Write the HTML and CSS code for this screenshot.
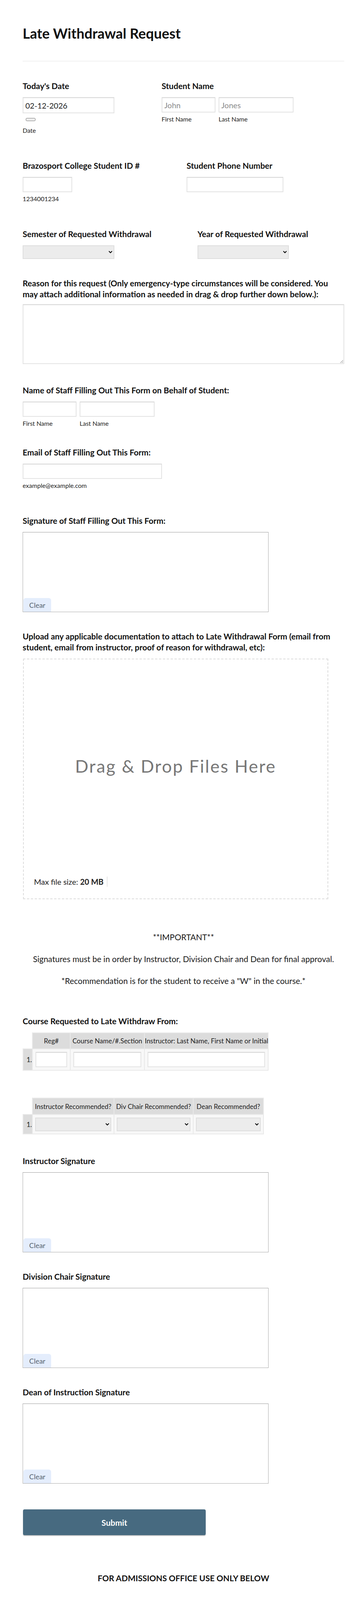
FILE: index.html
```html
<!DOCTYPE html>
<html lang="en">
<head>
  <meta charset="UTF-8">
  <title>Late Withdrawal Request</title>
  <link rel="stylesheet" href="styles.css">
</head>
<body>
  <form class="form" onsubmit="return false">
    <div class="form-header">
      <h1>Late Withdrawal Request</h1>
    </div>

    <div class="row">
      <div class="field col-date">
        <label class="label">Today's Date</label>
        <input class="text-input date-input" type="text" value="02-12-2026">
        <button class="cal" type="button"></button>
        <span class="hint date-hint">Date</span>
      </div>
      <div class="field">
        <label class="label">Student Name</label>
        <div class="name-pair">
          <div class="name-first">
            <input class="text-input" type="text" placeholder="John">
            <span class="sub">First Name</span>
          </div>
          <div class="name-last">
            <input class="text-input" type="text" placeholder="Jones">
            <span class="sub">Last Name</span>
          </div>
        </div>
      </div>
    </div>

    <div class="row">
      <div class="field col-id">
        <label class="label">Brazosport College Student ID #</label>
        <input class="text-input id-input" type="text">
        <span class="hint">1234001234</span>
      </div>
      <div class="field">
        <label class="label">Student Phone Number</label>
        <input class="text-input phone-input" type="text">
      </div>
    </div>

    <div class="row">
      <div class="field col-sem">
        <label class="label">Semester of Requested Withdrawal</label>
        <select class="select"><option></option></select>
      </div>
      <div class="field">
        <label class="label">Year of Requested Withdrawal</label>
        <select class="select year"><option></option></select>
      </div>
    </div>

    <div class="field">
      <label class="label long">Reason for this request (Only emergency-type circumstances will be considered. You may attach additional information as needed in drag &amp; drop further down below.):</label>
      <textarea class="textarea"></textarea>
    </div>

    <div class="field">
      <label class="label">Name of Staff Filling Out This Form on Behalf of Student:</label>
      <div class="name-pair">
        <div class="name-first">
          <input class="text-input" type="text">
          <span class="sub">First Name</span>
        </div>
        <div class="name-last">
          <input class="text-input" type="text">
          <span class="sub">Last Name</span>
        </div>
      </div>
    </div>

    <div class="field">
      <label class="label">Email of Staff Filling Out This Form:</label>
      <input class="text-input email-input" type="email">
      <span class="hint">example@example.com</span>
    </div>

    <div class="field">
      <label class="label">Signature of Staff Filling Out This Form:</label>
      <div class="sig">
        <button class="clear" type="button">Clear</button>
      </div>
    </div>

    <div class="field">
      <label class="label">Upload any applicable documentation to attach to Late Withdrawal Form (email from student, email from instructor, proof of reason for withdrawal, etc):</label>
      <div class="dropzone">
        <div class="drop-text">Drag &amp; Drop Files Here</div>
        <span class="max-size">Max file size: <b>20 MB</b></span>
      </div>
    </div>

    <div class="field notice">
      <p>**IMPORTANT**</p>
      <p>Signatures must be in order by Instructor, Division Chair and Dean for final approval.</p>
      <p>*Recommendation is for the student to receive a "W" in the course.*</p>
    </div>

    <div class="field">
      <label class="label">Course Requested to Late Withdraw From:</label>
      <table class="matrix course">
        <colgroup><col class="c-num"><col class="c-reg"><col class="c-course"><col class="c-inst"></colgroup>
        <thead>
          <tr><th class="corner"></th><th>Reg#</th><th>Course Name/#.Section</th><th>Instructor: Last Name, First Name or Initial</th></tr>
        </thead>
        <tbody>
          <tr><th class="num">1.</th><td><input class="cell-input" type="text"></td><td><input class="cell-input" type="text"></td><td><input class="cell-input" type="text"></td></tr>
        </tbody>
      </table>
    </div>

    <div class="field">
      <table class="matrix recommend">
        <colgroup><col class="c-num"><col class="c-ins"><col class="c-div"><col class="c-dean"></colgroup>
        <thead>
          <tr><th class="corner"></th><th>Instructor Recommended?</th><th>Div Chair Recommended?</th><th>Dean Recommended?</th></tr>
        </thead>
        <tbody>
          <tr>
            <th class="num">1.</th>
            <td><select class="cell-select"><option></option></select></td>
            <td><select class="cell-select"><option></option></select></td>
            <td><select class="cell-select"><option></option></select></td>
          </tr>
        </tbody>
      </table>
    </div>

    <div class="field">
      <label class="label">Instructor Signature</label>
      <div class="sig">
        <button class="clear" type="button">Clear</button>
      </div>
    </div>

    <div class="field">
      <label class="label">Division Chair Signature</label>
      <div class="sig">
        <button class="clear" type="button">Clear</button>
      </div>
    </div>

    <div class="field">
      <label class="label">Dean of Instruction Signature</label>
      <div class="sig">
        <button class="clear" type="button">Clear</button>
      </div>
    </div>

    <div class="field submit-field">
      <button class="submit" type="submit">Submit</button>
    </div>

    <div class="field office-heading">FOR ADMISSIONS OFFICE USE ONLY BELOW</div>

    <div class="row office">
      <div class="field col-date">
        <label class="label">Date Processed:</label>
        <input class="text-input date-input" type="text" placeholder="mm-dd-yyyy">
        <button class="cal" type="button"></button>
        <span class="hint date-hint">Date</span>
      </div>
      <div class="field">
        <label class="label">Processed By:</label>
        <input class="text-input by-input" type="text">
      </div>
    </div>

    <div class="field last">
      <label class="label">Signature of Admissions Personnel</label>
      <div class="sig">
        <button class="clear" type="button">Clear</button>
      </div>
    </div>
  </form>
</body>
</html>
```

FILE: styles.css
```css
* {
  box-sizing: border-box;
}

html,
body {
  margin: 0;
  padding: 0;
  background: #fff;
}

body {
  color: #111;
  font-family: Lato, "Liberation Sans", sans-serif;
}

.form {
  display: block;
  width: 930px;
  margin: 0;
  padding: 0 48px 0 58px;
}

.form-header {
  padding: 63px 0 49px;
  border-bottom: 1px solid #e4e4e4;
  margin-bottom: 25px;
}

h1 {
  margin: 0;
  font-size: 36px;
  line-height: 44px;
  font-weight: 700;
}

.row {
  display: flex;
}

.field {
  padding: 24px 0;
}

.field.last {
  padding-bottom: 0;
}

.col-date {
  width: 356px;
}

.col-id {
  width: 420px;
}

.col-sem {
  width: 448px;
}

.label {
  display: block;
  font-size: 21px;
  line-height: 28px;
  font-weight: 700;
  margin-bottom: 15px;
}

.label.long {
  margin-bottom: 12px;
}

.text-input {
  display: block;
  width: 100%;
  height: 39px;
  margin: 0;
  padding: 0 5px;
  border: 2px solid #e3e3e3;
  border-top-color: #d5d5d5;
  background: #fff;
  color: #222;
  font-family: Lato, "Liberation Sans", sans-serif;
  font-size: 20px;
}

.text-input::placeholder {
  color: #8a8a8a;
}

.date-input {
  width: 235px;
  height: 41px;
}

.id-input {
  width: 127px;
}

.phone-input {
  width: 248px;
}

.email-input {
  width: 357px;
}

.by-input {
  width: 247px;
}

.cal {
  display: block;
  width: 25px;
  height: 8px;
  margin: 12px 0 0 8px;
  padding: 0;
  border: 1px solid #7d7d7d;
  border-radius: 3px;
  background: #ececec;
}

.hint {
  display: block;
  font-size: 16px;
  line-height: 20px;
  margin-top: 7px;
  margin-bottom: 18px;
  color: #222;
}

.date-hint {
  margin-top: 14px;
}

.office .hint {
  margin-bottom: 3px;
}

.name-pair {
  display: flex;
  gap: 8px;
}

.name-first {
  width: 138px;
}

.name-last {
  width: 192px;
}

.sub {
  display: block;
  font-size: 16px;
  line-height: 20px;
  margin-top: 7px;
  margin-bottom: 2px;
  color: #222;
}

.select {
  display: block;
  width: 235px;
  height: 35px;
  margin: 0;
  border: 2px solid #dedede;
  background: #ececec;
  font-family: Lato, "Liberation Sans", sans-serif;
  font-size: 18px;
}

.select.year {
  width: 234px;
}

.textarea {
  display: block;
  width: 824px;
  height: 153px;
  margin: 0 0 5px;
  border: 2px solid #e3e3e3;
  border-top-color: #d5d5d5;
  font-family: Lato, "Liberation Sans", sans-serif;
  font-size: 20px;
}

.sig {
  position: relative;
  width: 630px;
  height: 205px;
  border: 1px solid #a9a9a9;
  border-top-color: #9a9a9a;
  background: #fff;
}

.clear {
  position: absolute;
  left: 1px;
  bottom: 0;
  width: 71px;
  height: 35px;
  padding: 0;
  border: none;
  border-radius: 6px 6px 0 0;
  background: #e4edfc;
  color: #56626f;
  font-family: Lato, "Liberation Sans", sans-serif;
  font-size: 18px;
}

.dropzone {
  display: flex;
  flex-direction: column;
  width: 782px;
  height: 616px;
  margin-top: 2px;
  margin-left: 1px;
  padding: 246px 26px 30px;
  border: 2px dashed #dcdcdc;
}

.drop-text {
  text-align: center;
  font-size: 45px;
  line-height: 54px;
  letter-spacing: 2.5px;
  color: #777;
}

.max-size {
  margin-top: auto;
  align-self: flex-start;
  padding-right: 9px;
  border-right: 1px solid #cfcfcf;
  font-size: 20px;
  line-height: 26px;
  color: #222;
}

.notice {
  padding: 59px 0 51px;
  text-align: center;
  font-size: 21px;
  line-height: 28px;
  color: #1a1a1a;
}

.notice p {
  margin: 0 0 28px;
}

.notice p:last-child {
  margin-bottom: 0;
}

.matrix {
  border-collapse: collapse;
  table-layout: fixed;
  margin-bottom: 6px;
}

.matrix th,
.matrix td {
  border: 2px solid #e9e9e9;
  padding: 0;
}

.matrix thead th {
  background: #dcdcdc;
  font-weight: 400;
  font-size: 17px;
  color: #222;
  text-align: center;
  white-space: nowrap;
}

.matrix thead th.corner {
  background: #fff;
  border-top: hidden;
  border-left: hidden;
}

.matrix .num {
  background: #dcdcdc;
  text-align: left;
  padding-left: 8px;
  font-weight: 400;
  font-size: 17px;
  color: #222;
}

.matrix td {
  background: #f8f8f8;
}

.course {
  width: 628px;
}

.course thead th {
  height: 41px;
}

.course td {
  height: 55px;
  padding: 0 7px;
}

.c-num {
  width: 24px;
}

.c-reg {
  width: 97px;
}

.c-course {
  width: 190px;
}

.c-inst {
  width: 317px;
}

.cell-input {
  display: block;
  width: 100%;
  height: 39px;
  margin: 0;
  border: 2px solid #e3e3e3;
  border-top-color: #d5d5d5;
  background: #fff;
  font-family: Lato, "Liberation Sans", sans-serif;
  font-size: 18px;
}

.recommend {
  width: 616px;
  margin-top: 15px;
}

.recommend thead th {
  height: 42px;
}

.recommend td {
  height: 50px;
  padding: 0 6px;
}

.c-ins {
  width: 209px;
}

.c-div {
  width: 203px;
}

.c-dean {
  width: 180px;
}

.cell-select {
  display: block;
  width: 100%;
  height: 35px;
  margin: 0;
  border: 2px solid #dedede;
  background: #ececec;
  font-family: Lato, "Liberation Sans", sans-serif;
  font-size: 16px;
}

.submit-field {
  padding: 42px 0 24px;
}

.submit {
  display: block;
  width: 468px;
  height: 66px;
  margin: 0 0 0 1px;
  border: none;
  border-radius: 4px;
  background: #476a80;
  color: #fff;
  font-family: Lato, "Liberation Sans", sans-serif;
  font-size: 21px;
  font-weight: 700;
  box-shadow: 0 2px 2px rgba(0, 0, 0, 0.25);
}

.office-heading {
  padding: 72px 0 68px;
  text-align: center;
  font-size: 21px;
  line-height: 28px;
  font-weight: 700;
}
```
